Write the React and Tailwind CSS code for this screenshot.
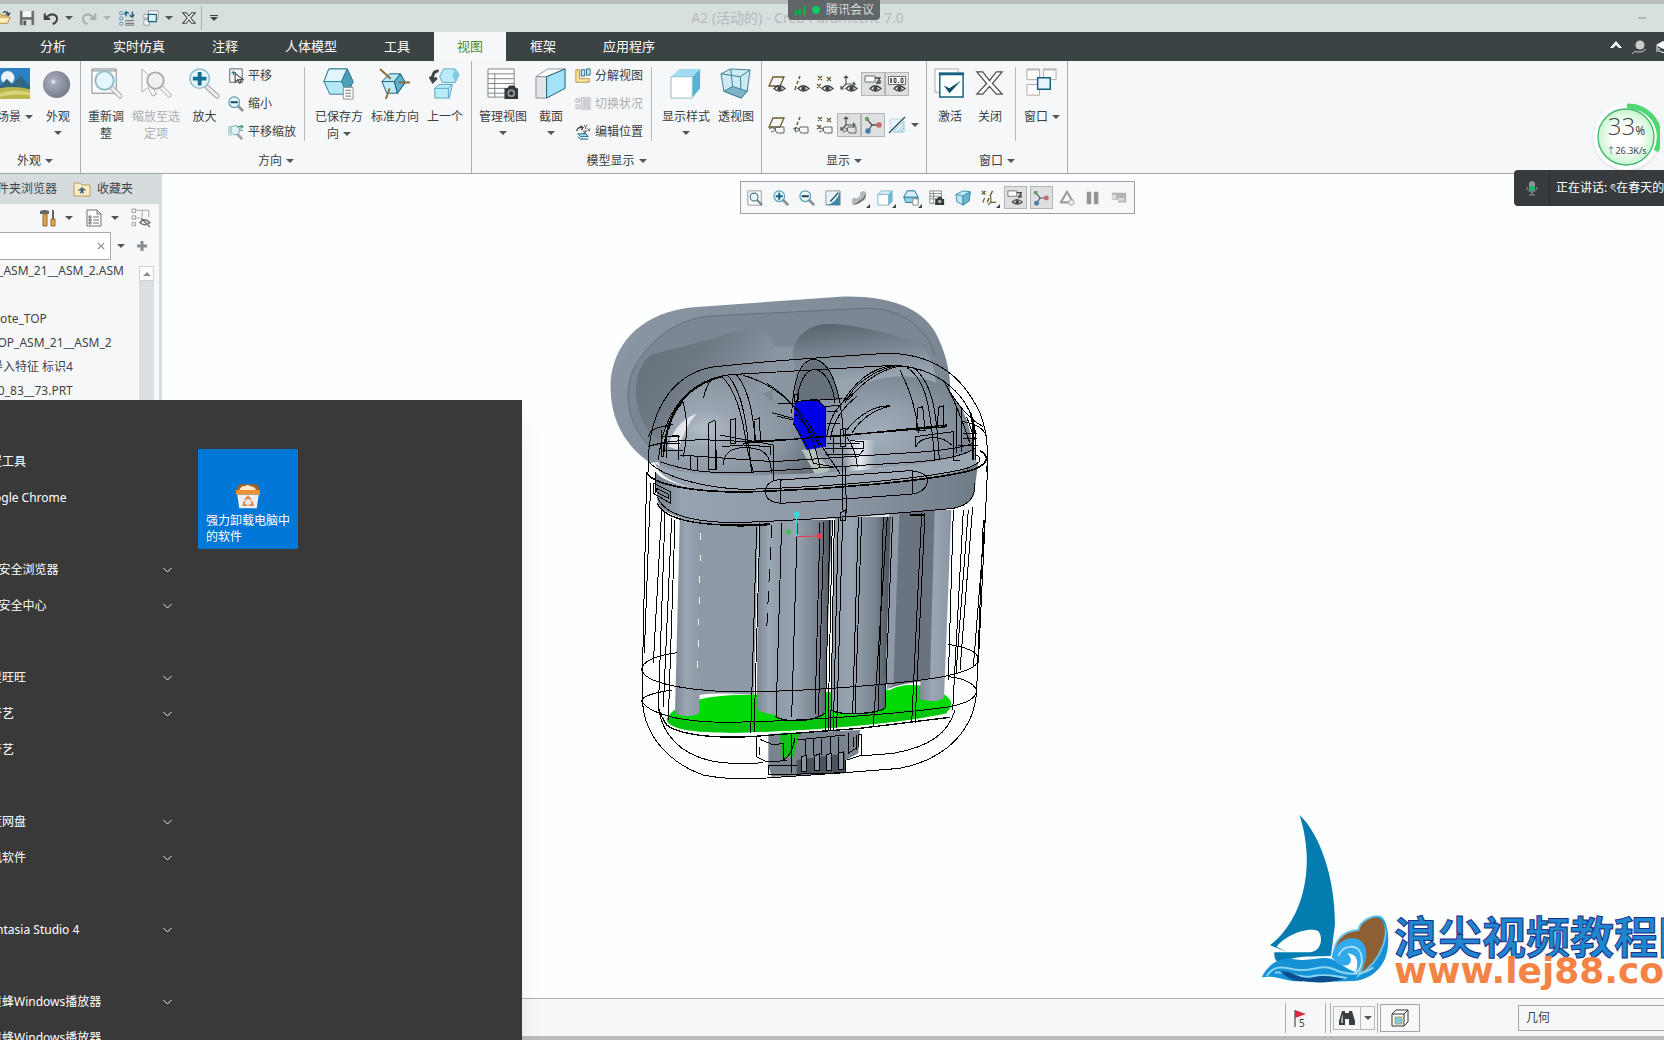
import React, { useState } from "react";

const tabs = [
  "分析",
  "实时仿真",
  "注释",
  "人体模型",
  "工具",
  "视图",
  "框架",
  "应用程序",
];

const tree = [
  { name: "TOP_ASM_21__ASM_2.ASM", root: true },
  { name: "" },
  { name: "Note_TOP" },
  { name: "TOP_ASM_21__ASM_2" },
  { name: "导入特征 标识4" },
  { name: "10_83__73.PRT" },
];

const apps = [
  { name: "设置工具" },
  { name: "Google Chrome" },
  null,
  { name: "360安全浏览器", folder: true },
  { name: "360安全中心", folder: true },
  null,
  { name: "阿里旺旺", folder: true },
  { name: "爱奇艺", folder: true },
  { name: "爱奇艺" },
  null,
  { name: "百度网盘", folder: true },
  { name: "腾讯软件", folder: true },
  null,
  { name: "Camtasia Studio 4", folder: true },
  null,
  { name: "大黄蜂Windows播放器", folder: true },
  { name: "大黄蜂Windows播放器" },
];

const eye = (
  <g>
    <path d="M6 13.500q5 -5.500 11 0q-5.500 5 -11 0z" fill="#fff" stroke="#3f4446" strokeWidth="1.300" />
    <circle cx="11.500" cy="13.500" r="2.200" fill="#3f4446" />
  </g>
);

const tag = (
  <path
    d="M1 13q3 -3 6 0M3 16q3 0 5 -3M8 11h8v6h-7l-2 -3z"
    fill="none"
    stroke="#5d6468"
  />
);

const plane = <path d="M5 2h11l-4 9H1z" fill="none" stroke="#6b5c2b" strokeWidth="1.300" />;
const axis = <path d="M8 1l-1 3M6 6l-1 3M4 11l-1 4" stroke="#6b5c2b" strokeWidth="1.500" />;
const points = (
  <path
    d="M2 1l4 4m0 -4l-4 4M11 2l4 4m0 -4l-4 4M1 9l4 4m0 -4l-4 4"
    stroke="#6b5c2b"
    strokeWidth="1.200"
  />
);
const csys = (
  <path
    d="M6 1v8h9M6 9l-5 5M4 3l2 -2l2 2M13 7l2 2l-2 2M1 11v3h3"
    fill="none"
    stroke="#4c5254"
    strokeWidth="1.200"
  />
);

// small icons are drawn on an 18 x 18 grid
const small = {
  open: (
    <g>
      <path d="M1 4h5l1 2h6v8H1z" fill="#f6d98e" stroke="#b28b3a" />
      <path d="M4 8h13l-3 7H1z" fill="#fdecb5" stroke="#b28b3a" />
      <path d="M9 3q5 -3 6 2M17 3l-2 3l-3 -2" fill="none" stroke="#3f4446" strokeWidth="1.500" />
    </g>
  ),
  save: (
    <g>
      <path d="M1 1h16v16H1z" fill="#6b7173" />
      <path d="M4 1h10v7H4z" fill="#f4f6f7" />
      <path d="M4 11h10v6H4z" fill="#dfe3e4" />
      <path d="M5 12h3v5H5z" fill="#4d5356" />
    </g>
  ),
  undo: (
    <path
      d="M2 4v6h6M3 9q7 -7 12 -2q3 5 -4 9"
      fill="none"
      stroke="#3f4446"
      strokeWidth="2.400"
    />
  ),
  redo: (
    <path
      d="M16 4v6h-6M15 9q-7 -7 -12 -2q-3 5 4 9"
      fill="none"
      stroke="#a9b0b1"
      strokeWidth="2.400"
    />
  ),
  regen: (
    <g fill="none">
      <path d="M1 2h3v3H1zM1 8h3v3H1zM1 14h3v3H1z" fill="#fff" stroke="#5b89a3" />
      <path d="M7 12h10M7 15h10M7 17h10" stroke="#596063" />
      <path d="M8 7V2l3 2M8 2l-2 3M15 2v6l-3 -2M15 8l2 -3" stroke="#17607f" strokeWidth="1.500" />
    </g>
  ),
  windows: (
    <g fill="#fff" stroke="#8a9296">
      <path d="M6 1h11v9H6zM1 5h6v4H1zM1 11h6v6H1z" />
      <path d="M6 5h9v8H6z" fill="#d9f0f8" stroke="#17607f" strokeWidth="1.300" />
    </g>
  ),
  close: (
    <path
      d="M2 3h4l3 4l3 -4h4l-5 6l5 6h-4l-3 -4l-3 4H2l5 -6z"
      fill="#fff"
      stroke="#3f4446"
      strokeWidth="1.200"
    />
  ),
  pan: (
    <g fill="none" stroke="#4d5356">
      <path d="M2 1h14v15H2z" />
      <path d="M8 6v10l3 -3l2 4l2 -1l-2 -3h4z" fill="#fff" strokeWidth="1.300" />
      <path d="M4 5h5M6 3v5" stroke="#17607f" />
    </g>
  ),
  zoomIn: (
    <g>
      <path d="M11 11l6 6" stroke="#8a9296" strokeWidth="3" />
      <circle cx="7" cy="7" r="6" fill="#e6f7fc" stroke="#5b9cb8" strokeWidth="1.300" />
      <path d="M3 7h8M7 3v8" stroke="#0f5f86" strokeWidth="2.200" />
    </g>
  ),
  zoomOut: (
    <g>
      <path d="M11 11l6 6" stroke="#8a9296" strokeWidth="3" />
      <circle cx="7" cy="7" r="6" fill="#e6f7fc" stroke="#5b9cb8" strokeWidth="1.300" />
      <path d="M3 7h8" stroke="#17405a" strokeWidth="2.200" />
    </g>
  ),
  refit: (
    <g>
      <path d="M1 1h15v16H1z" fill="#fff" stroke="#8a9296" />
      <path d="M11 11l6 6" stroke="#7d8589" strokeWidth="2.500" />
      <circle cx="8" cy="8" r="4.500" fill="#e6f7fc" stroke="#54707f" strokeWidth="1.300" />
    </g>
  ),
  panZoom: (
    <g>
      <path d="M10 11l6 6" stroke="#9aa2a5" strokeWidth="3" />
      <path d="M1 3h5M1 3v8l3 2" fill="none" stroke="#9fc7c9" strokeWidth="1.500" />
      <circle cx="8" cy="7" r="5" fill="#dff3f3" stroke="#7fb3b8" strokeWidth="1.300" />
      <path d="M10 3h6M14 1l3 2l-3 2M13 7h4" fill="none" stroke="#4f9a7e" strokeWidth="1.300" />
    </g>
  ),
  explode: (
    <g>
      <path d="M1 2h4v10h11v4H1z" fill="#fbe3a1" stroke="#b28b3a" />
      <path d="M7 2h4v7H7zM13 1h4v7h-4z" fill="#bfe6f5" stroke="#17607f" />
    </g>
  ),
  toggle: (
    <g fill="#e6e8ea" stroke="#b3b8bb">
      <path d="M1 3h4v4H1zM1 10h4v4H1zM7 2h10v13H7zM10 4h1v9h-1zM13 4h2v9h-2z" />
    </g>
  ),
  edit: (
    <g fill="none">
      <path d="M2 8q1 -5 6 -4M6 2l3 2l-2 3" stroke="#3f4446" strokeWidth="1.500" />
      <path d="M10 1l2 2l2 -2M12 3v3M14 5l3 3m0 -3l-3 3M9 8h4l-4 3h4" stroke="#3f4446" />
      <path d="M3 11h9l3 3H6zM3 14l3 3h9" fill="#a7dff1" stroke="#17607f" />
    </g>
  ),
  planeEye: <g>{plane}{eye}</g>,
  axisEye: <g>{axis}{eye}</g>,
  pointEye: <g>{points}{eye}</g>,
  csysEye: <g>{csys}{eye}</g>,
  noteEye: (
    <g>
      <path d="M1 1h10v6H1z" fill="#fff" stroke="#6b7173" />
      <path d="M11 3h5l-3 5M12 8h4v-3" fill="none" stroke="#3f4446" strokeWidth="1.300" />
      {eye}
    </g>
  ),
  dimEye: (
    <g>
      <path d="M0.500 1.500h17v8H0.500z" fill="#fff" stroke="#6b7173" />
      <path d="M3 3v5" stroke="#2f3436" strokeWidth="1.500" />
      <path d="M6 3.500h2v4H6zM13 3.500h2v4h-2z" fill="none" stroke="#2f3436" />
      <path d="M10 7h1v1h-1z" fill="#2f3436" />
      {eye}
    </g>
  ),
  planeTag: <g>{plane}{tag}</g>,
  axisTag: <g>{axis}{tag}</g>,
  pointTag: <g>{points}{tag}</g>,
  csysTag: <g>{csys}{tag}</g>,
  spin: (
    <g>
      <path d="M3 3l5 6h7M8 9l-4 6" fill="none" stroke="#4c5254" strokeWidth="1.300" />
      <circle cx="3" cy="3" r="2.200" fill="#6a9b67" />
      <circle cx="15" cy="9" r="2.800" fill="#c9686c" />
      <circle cx="4" cy="15" r="2.800" fill="#4c7fa5" />
    </g>
  ),
  hidden: (
    <g>
      <path d="M2 3h13l-12 12z" fill="#e6f7fc" stroke="#a8cddb" strokeDasharray="2 1" />
      <path d="M5 16l11 -11v11zM9 16l7 -7M12 16l4 -4" fill="#e6f7fc" stroke="#8fc3d8" />
      <path d="M1 17L17 1" stroke="#2b4a5c" strokeWidth="1.300" />
    </g>
  ),
  repaint: (
    <g>
      <path d="M1 1h16v16H1z" fill="#e6f4f8" stroke="#8a9296" />
      <path d="M17 1v16H1q12 -2 16 -16z" fill="#3d8aa6" />
      <path d="M6 13L15 3" stroke="#24495c" strokeWidth="1.500" />
    </g>
  ),
  shade: (
    <g>
      <path d="M1 12q0 -4 5 -3q5 0 4 -6q5 -4 7 0q1 6 -5 9q-6 6 -11 4z" fill="#b5b9bb" />
      <path d="M9 12q6 -2 7 -8q2 6 -4 9q-5 4 -9 3q4 -1 6 -4z" fill="#6a6f71" />
    </g>
  ),
  box: (
    <g stroke="#7ab5cd">
      <path d="M1 5l4 -4h12l-4 4z" fill="#d9f2fa" />
      <path d="M13 5l4 -4v12l-4 4z" fill="#6bbad8" />
      <path d="M1 5h12v12H1z" fill="#fff" />
    </g>
  ),
  saved: (
    <g stroke="#2f7d98">
      <path d="M5 1h8l4 7l-4 6H5L1 8z" fill="#b9e6f4" />
      <path d="M1 8h16v6H3z" fill="#8fcfe2" />
      <path d="M5 1h8l4 7H1z" fill="#d5f0f8" />
      <path d="M11 10h6v7h-6z" fill="#fff" stroke="#7d8589" />
    </g>
  ),
  manage: (
    <g>
      <path d="M1 1h13v14H1zM1 4h13M1 7h13M1 10h13M5 1v14" fill="#fff" stroke="#7d8589" />
      <path d="M7 10h2l1 -2h4l1 2h2v7H7z" fill="#33383a" />
      <circle cx="12" cy="13" r="2" fill="#a9b0b1" />
    </g>
  ),
  persp: (
    <g stroke="#3c8aa6">
      <path d="M1 5l8 -4l8 1l-1 10l-7 5l-7 -4z" fill="#b9e6f4" />
      <path d="M1 5l8 2l8 -5M9 7v10" fill="none" />
      <path d="M9 7l8 -5l-1 10l-7 5z" fill="#6bb4cd" />
    </g>
  ),
  datum: (
    <g fill="none">
      <path d="M1 1l4 4m0 -4l-4 4M13 1l-3 6M9 9l-2 5" stroke="#6b5c2b" strokeWidth="1.500" />
      <path d="M11 7v7h6M11 14l-3 3M4 9l-2 5" stroke="#6b5c2b" strokeWidth="1.300" />
    </g>
  ),
  warn: (
    <g fill="none" stroke="#9a9ea0">
      <path d="M9 2l7 12H2z" strokeWidth="2.500" strokeLinejoin="round" />
      <circle cx="14" cy="14" r="3" fill="#eceeef" />
    </g>
  ),
  pause: <path d="M2 2h5v14H2zM10 2h5v14h-5z" fill="#929698" />,
  export: (
    <g>
      <path d="M1 3h16v11H8v-3H1z" fill="#b1b4b6" />
      <path d="M1 5h5v5H1zM8 9h7v3H8z" fill="#d9dbdc" />
    </g>
  ),
  folder: (
    <g>
      <path d="M1 3h6l2 2h8v11H1z" fill="#fbeec8" stroke="#b49c5c" />
      <path d="M9 7v7M5 10h8M7 8l4 5M11 8l-4 5" stroke="#24495c" />
    </g>
  ),
  tools: (
    <g>
      <path d="M1 2q5 -2 9 0v3H1z" fill="#60666a" />
      <path d="M4 5h4v12H4z" fill="#dba35c" stroke="#9b6b2c" />
      <path d="M14 1v9" stroke="#60666a" strokeWidth="2" />
      <path d="M12 10h4v7h-4z" fill="#e0a45a" stroke="#9b6b2c" />
    </g>
  ),
  list: (
    <g fill="none" stroke="#6b7173">
      <path d="M2 1h10l4 4v12H2z" fill="#fff" />
      <path d="M12 1v4h4M8 8h6M8 11h6M8 14h6" />
      <path d="M4 7h2v2H4zM4 10h2v2H4zM4 13h2v2H4z" />
    </g>
  ),
  treeHide: (
    <g fill="none" stroke="#a5abad">
      <path d="M1 1h3v3H1zM1 7h3v3H1zM1 13h3v3H1zM4 2h12M10 2v6M4 9h4M16 2v6" />
      <path d="M8 13q4 -5 9 0q-5 4 -9 0zM9 9l8 8" stroke="#6b7173" strokeWidth="1.300" />
    </g>
  ),
};

// large icons are drawn on a 32 x 32 grid
const large = {
  scene: (
    <g>
      <path d="M0 0h32v32H0z" fill="#2f7fc4" />
      <circle cx="9" cy="10" r="7" fill="#eaf6fc" />
      <path d="M0 20L8 11l6 6l8 -9l10 10v6H0z" fill="#33667f" />
      <path d="M0 21q16 -3 32 1v10H0z" fill="#b9b64c" />
      <path d="M0 26q16 -5 32 -1v3q-16 -2 -32 2z" fill="#d9d27a" />
    </g>
  ),
  sphere: (
    <g>
      <defs>
        <radialGradient id="sphere" cx="0.380" cy="0.400" r="0.650">
          <stop offset="0" stopColor="#f0f2f8" />
          <stop offset="0.180" stopColor="#a4a9b8" />
          <stop offset="1" stopColor="#757a88" />
        </radialGradient>
      </defs>
      <circle cx="15" cy="17" r="14" fill="url(#sphere)" />
    </g>
  ),
  refit: (
    <g>
      <path d="M2 1h25v25H2z" fill="#fdfefe" stroke="#7d8589" />
      <path d="M2 3h25" stroke="#7d8589" />
      <path d="M22 20l9 9" stroke="#9aa0a3" strokeWidth="5" strokeLinecap="round" />
      <path d="M22 20l9 9" stroke="#eceeef" strokeWidth="3" strokeLinecap="round" />
      <circle cx="15" cy="13" r="9.500" fill="#e6f7fc" stroke="#8fbccb" strokeWidth="2" />
    </g>
  ),
  zoomSel: (
    <g stroke="#a9adb0">
      <path d="M2 1v24l6 -5l5 9l4 -2l-5 -9h8z" fill="#f8f9fa" />
      <path d="M22 20l8 8" stroke="#b3b7b9" strokeWidth="5" strokeLinecap="round" />
      <path d="M22 20l8 8" stroke="#f0f1f2" strokeWidth="3" strokeLinecap="round" />
      <circle cx="16" cy="13" r="8.500" fill="#eff0f1" strokeWidth="2" />
    </g>
  ),
  zoomIn: (
    <g>
      <path d="M19 20l10 9" stroke="#9aa0a3" strokeWidth="5" strokeLinecap="round" />
      <path d="M19 20l10 9" stroke="#eceeef" strokeWidth="3" strokeLinecap="round" />
      <circle cx="11" cy="11" r="10" fill="#e6f7fc" stroke="#8fbccb" strokeWidth="1.500" />
      <path d="M4 11h14M11 4v14" stroke="#136f98" strokeWidth="4" />
    </g>
  ),
  saved: (
    <g stroke="#2f7d98">
      <path d="M6 1h19l6 13l-6 13H7L1 14z" fill="#b4e8f6" />
      <path d="M6 1h19l-6 13H1z" fill="#e0f6fb" />
      <path d="M25 1l6 13l-6 13l-6 -13z" fill="#4c9fb5" />
      <path d="M21 20h10v12H21z" fill="#fff" stroke="#8a9296" />
      <path d="M23 23h6M23 26h6M23 29h6" stroke="#6b7173" />
    </g>
  ),
  standard: (
    <g>
      <path d="M3 14l8 -8h11l5 9l-8 11H8z" fill="#bdeaf7" stroke="#17607f" />
      <path d="M3 14h13l6 -8M16 14l3 12" fill="none" stroke="#17607f" />
      <path d="M16 14l6 -8l5 9l-8 11z" fill="#5fb2cd" stroke="#17607f" />
      <path d="M1 1l11 10M20 15h12M11 21L7 32" stroke="#8a6d3b" strokeWidth="2" />
    </g>
  ),
  previous: (
    <g>
      <path d="M10 3q-7 0 -6 9M1 9l3 5l4 -4" fill="none" stroke="#3f4446" strokeWidth="3" />
      <path d="M15 1h12l4 6l-4 8H14l-3 -6z" fill="#b9ebf8" stroke="#5ba9c4" />
      <path d="M27 1l4 6l-4 8l-3 -7z" fill="#7fcbe2" />
      <path d="M6 21l4 -4h14l-3 14H6z" fill="#b9ebf8" stroke="#5ba9c4" />
      <path d="M6 21h14l4 -4M20 21v10" fill="none" stroke="#5ba9c4" />
    </g>
  ),
  manage: (
    <g>
      <path
        d="M1 1h27v29H1zM1 6h27M1 11h27M1 16h27M1 21h27M1 26h27M8 6v24"
        fill="#fff"
        stroke="#7d8589"
      />
      <path d="M18 21h3l2 -3h5l2 3h2v11H18z" fill="#33383a" />
      <circle cx="25" cy="26" r="4" fill="#8a9093" />
      <circle cx="25" cy="26" r="2" fill="#2a2e30" />
    </g>
  ),
  section: (
    <g>
      <path d="M1 9L13 1h18L12 9z" fill="#fff" stroke="#8a9296" />
      <path d="M1 9h11v22H1z" fill="#e3e5ea" stroke="#8a9296" />
      <path d="M12 9L31 1v20L12 31z" fill="#a3e3f8" stroke="#17607f" />
    </g>
  ),
  style: (
    <g>
      <path d="M1 9l9 -8h21l-8 8z" fill="#9fdcf0" />
      <path d="M23 9l8 -8v20l-8 10z" fill="#57b3d4" />
      <path d="M1 9h22v22H1z" fill="#fff" stroke="#8fbccb" />
    </g>
  ),
  persp: (
    <g stroke="#3c7f96">
      <path d="M1 6L11 1l20 1l-3 22l-6 7l-18 -7z" fill="#cdeaf2" />
      <path d="M1 6l20 3L31 2M21 9l1 22" fill="none" />
      <path d="M4 24l9 -5l15 5l-6 7z" fill="#7fb4c7" />
      <path d="M11 1l2 18" fill="none" />
    </g>
  ),
  activate: (
    <g>
      <path d="M1 1h24v24H1z" fill="#fff" stroke="#a5abad" />
      <path d="M6 6h24v24H6z" fill="#fff" stroke="#17607f" strokeWidth="1.500" />
      <path d="M5 6h26" stroke="#17607f" strokeWidth="3" />
      <path d="M10 18l6 8L28 13l-12 8z" fill="#0f4f66" />
    </g>
  ),
  close: (
    <path
      d="M3 4h6l7 9l7 -9h6l-10 12l10 11h-6l-7 -8l-7 8H3l10 -11z"
      fill="#fff"
      stroke="#4c5254"
      strokeWidth="1.300"
    />
  ),
  window: (
    <g fill="#fff" stroke="#b0a8a4">
      <path d="M1 1h13v11H1zM18 1h13v11H18zM1 17h13v11H1z" />
      <path d="M1 2h13M18 2h13" />
      <path d="M12 10h13v12H12z" fill="#e3f5fa" stroke="#17607f" strokeWidth="1.500" />
    </g>
  ),
};

function Icon({ name, className = "size-[18px]" }) {
  return (
    <svg viewBox="0 0 18 18" className={"shrink-0 " + className} fill="none" aria-hidden="true">
      {small[name]}
    </svg>
  );
}

function BigIcon({ name }) {
  return (
    <svg viewBox="0 0 33 33" className="size-8 shrink-0" fill="none" aria-hidden="true">
      {large[name]}
    </svg>
  );
}

function Caret({ className = "text-[#50575a]" }) {
  return (
    <svg viewBox="0 0 8 4" className={"w-2 h-1 shrink-0 " + className} aria-hidden="true">
      <path d="M0 0h8l-4 4z" fill="currentColor" />
    </svg>
  );
}

function BigButton({ icon, lines, caret, width, disabled }) {
  return (
    <button
      type="button"
      disabled={disabled}
      className={
        "flex flex-col items-center gap-2 pt-[7px] shrink-0 leading-[17px] whitespace-nowrap disabled:text-[#a9aeb1] " +
        width
      }
    >
      <BigIcon name={icon} />
      <span className="flex flex-col items-center">
        {lines.map((line, index) => (
          <span key={line} className="flex items-center gap-1">
            {line}
            {caret === "inline" && index === lines.length - 1 && <Caret />}
          </span>
        ))}
        {caret === "below" && (
          <span className="flex items-center h-4">
            <Caret />
          </span>
        )}
      </span>
    </button>
  );
}

function SmallButton({ icon, label, disabled }) {
  return (
    <button
      type="button"
      disabled={disabled}
      className="flex items-center gap-1 h-7 whitespace-nowrap disabled:text-[#a9aeb1]"
    >
      <Icon name={icon} className="size-4" />
      {label}
    </button>
  );
}

function Group({ label, className = "", children }) {
  return (
    <section className={"flex flex-col shrink-0 border-r border-[#a9afb2] " + className}>
      <div className="flex h-21">{children}</div>
      <button type="button" className="flex items-center justify-center gap-1 h-7 pt-1">
        {label}
        <Caret />
      </button>
    </section>
  );
}

function Divider({ className = "" }) {
  return <div className={"w-px h-[74px] mt-1.5 bg-[#b5babd] " + className} />;
}

function ToggleRow({ icons, active, children }) {
  return (
    <div className="flex items-center">
      {icons.map((name) => (
        <button
          key={name}
          type="button"
          aria-label={name}
          className={
            "size-6 flex items-center justify-center border " +
            (active.includes(name)
              ? "bg-[#dedfe1] border-[#b3b6b8]"
              : "border-transparent")
          }
        >
          <Icon name={name} />
        </button>
      ))}
      {children}
    </div>
  );
}

function TitleBar() {
  return (
    <div className="flex items-center h-8 border-t-4 border-[#b8bcbe] bg-[#d7dfdf]">
      <div className="flex items-center gap-2 -ml-[5px]">
        <button type="button" aria-label="打开"><Icon name="open" className="size-4" /></button>
        <button type="button" aria-label="保存"><Icon name="save" className="size-4" /></button>
        <button type="button" aria-label="撤消" className="flex items-center gap-1.5">
          <Icon name="undo" className="size-4" />
          <Caret />
        </button>
        <button type="button" aria-label="重做" className="flex items-center gap-1.5">
          <Icon name="redo" className="size-4" />
          <Caret className="text-[#a9b0b1]" />
        </button>
        <button type="button" aria-label="重新生成"><Icon name="regen" className="size-4" /></button>
        <button type="button" aria-label="窗口" className="flex items-center gap-1.5">
          <Icon name="windows" className="size-4" />
          <Caret />
        </button>
        <button type="button" aria-label="关闭"><Icon name="close" className="size-4" /></button>
        <div className="w-px h-6 -ml-1 bg-[#a9b0b1]" />
        <button type="button" aria-label="自定义" className="flex flex-col gap-px">
          <span className="w-2 h-px bg-[#3f4446]" />
          <Caret className="text-[#3f4446]" />
        </button>
      </div>
      <h1 className="flex-1 text-center text-sm text-[#b3bbbb]">
        A2 (活动的) - Creo Parametric 7.0
      </h1>
      <div className="flex justify-end w-[287px] pr-[18px]">
        <button type="button" aria-label="最小化" className="w-2 h-0.5 bg-[#b3b9b9]" />
      </div>
    </div>
  );
}

function TabBar({ tab, setTab }) {
  return (
    <nav className="flex items-center justify-between h-[29px] pl-[17px] bg-[#3c4344] text-white overflow-hidden">
      <div className="flex gap-px h-full">
        {tabs.map((t) => (
          <button
            key={t}
            type="button"
            onClick={() => setTab(t)}
            className={
              "px-[23px] text-[13px] whitespace-nowrap " +
              (t === tab ? "bg-[#f6f8f9] text-[#4c8a2c]" : "")
            }
          >
            {t}
          </button>
        ))}
      </div>
      <div className="flex items-center gap-2.5 -mr-1.5">
        <button type="button" aria-label="收起">
          <svg viewBox="0 0 12 8" className="w-3 h-2 mb-1.5">
            <path d="M0 8l6 -7l6 7h-3l-3 -3l-3 3z" fill="#fff" />
          </svg>
        </button>
        <button type="button" aria-label="搜索">
          <svg viewBox="0 0 14 14" className="size-3.5">
            <circle cx="8" cy="5" r="4.500" fill="#c9cfcf" />
            <path d="M0 14q3 -4 6 -2q4 1 8 -3" fill="none" stroke="#c9cfcf" />
          </svg>
        </button>
        <button type="button" aria-label="学习">
          <svg viewBox="0 0 14 12" className="w-3.5 h-3">
            <path d="M0 4l7 -4l7 4l-7 4z" fill="#fff" />
            <path d="M3 7v3q4 3 8 0V7M1 5v6" fill="none" stroke="#fff" />
          </svg>
        </button>
      </div>
    </nav>
  );
}

function Ribbon() {
  return (
    <div className="flex h-[113px] bg-[#f6f7f9] border-b border-[#9fa7aa] text-xs text-[#3a4043] overflow-hidden">
      <Group label="外观" className="w-[91px] -ml-[10px]">
        <BigButton icon="scene" lines={["场景"]} caret="inline" width="w-[50px]" />
        <BigButton icon="sphere" lines={["外观"]} caret="below" width="w-9" />
      </Group>
      <Group label="方向" className="w-[391px]">
        <BigButton icon="refit" lines={["重新调", "整"]} width="w-[50px]" />
        <BigButton icon="zoomSel" lines={["缩放至选", "定项"]} width="w-[50px]" disabled />
        <BigButton icon="zoomIn" lines={["放大"]} width="w-[47px]" />
        <div className="pt-px">
          <SmallButton icon="pan" label="平移" />
          <SmallButton icon="zoomOut" label="缩小" />
          <SmallButton icon="panZoom" label="平移缩放" />
        </div>
        <Divider className="ml-2 mr-1.5" />
        <BigButton icon="saved" lines={["已保存方", "向"]} caret="inline" width="w-14" />
        <BigButton icon="standard" lines={["标准方向"]} width="w-14" />
        <BigButton icon="previous" lines={["上一个"]} width="w-11" />
      </Group>
      <Group label="模型显示" className="w-[290px]">
        <BigButton icon="manage" lines={["管理视图"]} caret="below" width="w-14 ml-[3px]" />
        <BigButton icon="section" lines={["截面"]} caret="below" width="w-10" />
        <div className="ml-1 pt-px">
          <SmallButton icon="explode" label="分解视图" />
          <SmallButton icon="toggle" label="切换状况" disabled />
          <SmallButton icon="edit" label="编辑位置" />
        </div>
        <Divider className="ml-2 mr-1.5" />
        <BigButton icon="style" lines={["显示样式"]} caret="below" width="w-14" />
        <BigButton icon="persp" lines={["透视图"]} width="w-11" />
      </Group>
      <Group label="显示" className="w-[165px]">
        <div className="flex flex-col justify-between pl-[3px] pt-[11px] pb-2">
          <ToggleRow
            icons={["planeEye", "axisEye", "pointEye", "csysEye", "noteEye", "dimEye"]}
            active={["noteEye", "dimEye"]}
          />
          <ToggleRow
            icons={["planeTag", "axisTag", "pointTag", "csysTag", "spin", "hidden"]}
            active={["csysTag", "spin"]}
          >
            <Caret className="text-[#50575a] ml-0.5" />
          </ToggleRow>
        </div>
      </Group>
      <Group label="窗口" className="w-[141px]">
        <BigButton icon="activate" lines={["激活"]} width="w-11 ml-px" />
        <BigButton icon="close" lines={["关闭"]} width="w-9" />
        <Divider className="ml-[7px] mr-1" />
        <BigButton icon="window" lines={["窗口"]} caret="inline" width="w-11" />
      </Group>
    </div>
  );
}

function Sidebar() {
  const [search, setSearch] = useState("");

  return (
    <aside className="flex flex-col w-[162px] shrink-0 overflow-hidden bg-[#d6dcdd] text-xs text-[#3f4548]">
      <div className="flex items-center gap-4 h-[30px] -ml-[15px] whitespace-nowrap">
        <button type="button">文件夹浏览器</button>
        <button type="button" className="flex items-center gap-1.5">
          <Icon name="folder" />
          收藏夹
        </button>
      </div>
      <div className="flex-1 min-h-0 mr-[3px] bg-[#f7f8f9] overflow-hidden">
        <div className="flex items-center justify-end gap-3 h-7 pr-2">
          <button type="button" aria-label="工具" className="flex items-center gap-2">
            <Icon name="tools" />
            <Caret />
          </button>
          <button type="button" aria-label="设置" className="flex items-center gap-2">
            <Icon name="list" />
            <Caret />
          </button>
          <button type="button" aria-label="隐藏">
            <Icon name="treeHide" className="size-5" />
          </button>
        </div>
        <div className="flex items-center">
          <div className="flex items-center justify-end w-[111px] h-7 border border-l-0 border-[#a5abad] bg-white">
            <input
              type="text"
              aria-label="搜索"
              value={search}
              onChange={(e) => setSearch(e.target.value)}
              className="flex-1 min-w-0 outline-none"
            />
            <button type="button" aria-label="清除" onClick={() => setSearch("")}>
              <svg viewBox="0 0 10 10" className="size-2 mr-[5px]">
                <path d="M1 1l8 8M9 1l-8 8" stroke="#8a9093" strokeWidth="1.500" />
              </svg>
            </button>
          </div>
          <button type="button" aria-label="过滤" className="ml-1.5">
            <Caret />
          </button>
          <button type="button" aria-label="添加" className="ml-3">
            <svg viewBox="0 0 10 10" className="size-2.5">
              <path d="M5 0v10M0 5h10" stroke="#868c8f" strokeWidth="3" />
            </svg>
          </button>
        </div>
        <div className="flex justify-between h-full pr-[5px]">
          <ul className="-ml-[9px] -mt-px whitespace-nowrap">
            {tree.map((node, index) => (
              <li key={index} className={"h-6 leading-6 " + (node.root ? "-ml-4" : "")}>
                {node.name}
              </li>
            ))}
          </ul>
          <div className="w-[15px] mt-1.5 bg-[#dcdfe2]">
            <div className="flex items-center justify-center h-[15px] border border-[#d0d3d6] bg-white">
              <Caret className="text-[#8a9093] rotate-180" />
            </div>
          </div>
        </div>
      </div>
    </aside>
  );
}

const viewTools = [
  "refit",
  "zoomIn",
  "zoomOut",
  "repaint",
  "shade",
  "box",
  "saved",
  "manage",
  "persp",
  "datum",
  "noteEye",
  "spin",
  "warn",
  "pause",
  "export",
];

const toolMenus = ["shade", "box", "saved", "datum"];

function ViewToolbar() {
  return (
    <div className="flex items-center gap-[3px] h-[33px] px-[3px] border border-[#9aa1a4] bg-[#f6f7f9]">
      {viewTools.map((name) => (
        <button
          key={name}
          type="button"
          aria-label={name}
          className={
            "relative flex items-center justify-center w-[23px] h-[23px] border " +
            (name === "noteEye" || name === "spin"
              ? "bg-[#dedfe1] border-[#b3b6b8]"
              : "border-transparent")
          }
        >
          <Icon name={name} className="size-4" />
          {toolMenus.includes(name) && (
            <svg viewBox="0 0 4 4" className="absolute right-0 bottom-0 size-1">
              <path d="M4 0v4H0z" fill="#3f4446" />
            </svg>
          )}
        </button>
      ))}
    </div>
  );
}

function Model() {
  return (
    <svg
      viewBox="0 0 1200 1530"
      className="absolute left-[438px] top-[106px] w-[400px] h-[510px]"
      fill="none"
      role="img"
      aria-label="A2"
    >
      <defs>
        <linearGradient id="lid" x1="0" x2="1" y1="0" y2="0.300">
          <stop offset="0" stopColor="#95a1ae" />
          <stop offset="0.150" stopColor="#8894a1" />
          <stop offset="1" stopColor="#7c8794" />
        </linearGradient>
        <linearGradient id="cavity" x1="0" x2="1" y1="0.100" y2="0.700">
          <stop offset="0" stopColor="#65707b" />
          <stop offset="0.400" stopColor="#6e7984" />
          <stop offset="1" stopColor="#98a3b0" />
        </linearGradient>
        <linearGradient id="cavityR" x1="0" x2="0.200" y1="0" y2="0.800">
          <stop offset="0" stopColor="#566069" />
          <stop offset="0.600" stopColor="#7e8996" />
          <stop offset="1" stopColor="#98a3b0" />
        </linearGradient>
        <radialGradient id="dome" cx="0.300" cy="0.500" r="0.750">
          <stop offset="0" stopColor="#b4bec8" />
          <stop offset="0.250" stopColor="#9ba6b2" />
          <stop offset="0.700" stopColor="#8994a1" />
          <stop offset="1" stopColor="#66707b" />
        </radialGradient>
        <radialGradient id="domeR" cx="0.350" cy="0.600" r="0.800">
          <stop offset="0" stopColor="#a3aebb" />
          <stop offset="0.400" stopColor="#929dab" />
          <stop offset="1" stopColor="#6f7a86" />
        </radialGradient>
        <linearGradient id="stem" x1="0" x2="1" y1="0" y2="0">
          <stop offset="0" stopColor="#8f9aa8" />
          <stop offset="0.350" stopColor="#98a3b1" />
          <stop offset="0.750" stopColor="#77828e" />
          <stop offset="1" stopColor="#474f57" />
        </linearGradient>
        <linearGradient id="post" x1="0" x2="1" y1="0" y2="0">
          <stop offset="0" stopColor="#7d8895" />
          <stop offset="0.400" stopColor="#9ba6b5" />
          <stop offset="1" stopColor="#8b96a4" />
        </linearGradient>
        <linearGradient id="band" x1="0" x2="1" y1="0" y2="0">
          <stop offset="0" stopColor="#737e8a" />
          <stop offset="0.080" stopColor="#98a3b1" />
          <stop offset="0.600" stopColor="#8a96a4" />
          <stop offset="1" stopColor="#707b87" />
        </linearGradient>
        <linearGradient id="shine" x1="0" x2="1" y1="0" y2="0">
          <stop offset="0" stopColor="#fff" stopOpacity="0" />
          <stop offset="0.500" stopColor="#f2f4fb" stopOpacity="0.900" />
          <stop offset="1" stopColor="#fff" stopOpacity="0" />
        </linearGradient>
      </defs>

      {/* lid */}
      <path
        d="M150 548C60 485 28 400 32 300C45 175 140 95 280 82L720 50C860 45 960 80 1005 155C1035 210 1055 280 1050 350V500z"
        fill="url(#lid)"
      />
      <path
        d="M150 500C70 420 60 300 135 215C185 155 250 115 330 108L800 85C900 85 980 140 1005 225L1020 480z"
        fill="#7b8793"
      />
      <path
        d="M150 500C70 420 60 300 135 215C185 155 250 115 330 108L800 85C900 85 980 140 1005 225"
        stroke="#56606a"
        strokeWidth="2"
      />
      <path
        d="M190 490C100 440 80 290 150 225L330 178C400 155 450 145 480 150C520 165 530 195 525 250L515 330L300 420z"
        fill="url(#cavity)"
      />
      <path d="M525 200L585 200V420L515 400z" fill="#8a95a2" />
      <path
        d="M580 240C570 180 620 134 680 132C760 130 860 160 930 180C985 205 1005 240 1010 330L620 360z"
        fill="url(#cavityR)"
      />
      <path d="M585 330C600 260 620 240 640 240C680 245 710 300 720 370L600 380z" fill="#67717c" />

      {/* board and inner posts */}
      <path
        d="M200 1318C220 1270 320 1242 440 1245L870 1230C900 1210 980 1205 1035 1245C1062 1262 1060 1290 1030 1300C900 1332 600 1355 400 1358C290 1358 205 1350 200 1318z"
        fill="#00da06"
      />
      <path d="M205 1310C300 1335 500 1330 700 1312L1045 1278L1040 1300C900 1332 600 1355 400 1358C290 1358 205 1350 200 1318z" fill="#05c50c" />
      <path d="M300 720H475L462 1245C400 1240 340 1238 298 1245z" fill="#8f9aa7" />
      <path d="M240 700H308L298 1298C280 1312 240 1310 225 1298z" fill="url(#post)" />
      <path d="M880 690H1020L1000 1200C960 1205 900 1210 870 1225z" fill="#697480" />
      <path d="M1004 690H1054L1032 1255C1010 1268 970 1265 958 1255L962 1200L990 1195z" fill="url(#post)" />
      <path d="M868 700H898L880 1215L860 1230z" fill="#8e9aa7" />
      <path d="M476 720H560L530 1305C500 1302 475 1295 470 1285z" fill="url(#post)" />
      <path d="M545 720H695L675 1295C650 1325 560 1330 528 1310z" fill="url(#stem)" />
      <path d="M705 710H872L855 1280C830 1308 730 1310 692 1290z" fill="url(#stem)" />

      {/* earbud heads */}
      <path d="M560 360H730L740 600H600z" fill="#8b96a3" />
      <path
        d="M175 550C185 400 250 320 350 295C460 295 550 380 595 460C625 515 640 560 645 600L200 585z"
        fill="url(#dome)"
      />
      <path
        d="M680 580C660 450 720 350 800 310C850 285 950 280 1010 310C1080 350 1115 420 1122 540z"
        fill="url(#domeR)"
      />
      <path d="M205 500Q220 430 290 400Q255 440 235 510z" fill="#f2f5f9" opacity="0.800" />
      <path d="M735 480H825V580H735z" fill="url(#shine)" />
      <path d="M605 510L640 505L690 570L650 590z" fill="#b5c0ba" />
      <path d="M585 365L650 358L675 380V500L620 510L580 430z" fill="#0000e6" />

      {/* collar */}
      <path
        d="M165 548C220 590 400 590 640 580C900 565 1080 545 1125 505L1130 550C1080 600 700 635 420 636C290 636 180 610 165 548z"
        fill="#9aa6b2"
      />
      <path
        d="M165 575L172 660C180 705 260 727 380 730C650 725 950 698 1060 685C1105 675 1125 660 1125 620L1135 545C1100 590 800 625 420 636C300 632 200 615 165 575z"
        fill="url(#band)"
      />

      {/* connector */}
      <path d="M505 1362L780 1350L775 1420L738 1440L735 1480L515 1490L505 1455z" fill="#7a848f" />
      <path d="M540 1358H598L580 1430H545z" fill="#0bc414" />
      <path d="M590 1440L735 1420V1478L590 1482z" fill="#4b535a" />

      <g stroke="#000" strokeWidth="3" shapeRendering="crispEdges">
        {/* transparent lid */}
        <path d="M145 575C140 400 210 290 330 262C500 242 700 230 860 220C1000 220 1090 290 1140 400C1165 460 1165 520 1160 575" />
        <path d="M175 540C190 400 260 300 390 284L880 256C1020 262 1110 350 1125 450V540" />
        <path d="M145 545C200 600 340 625 430 628C700 622 1000 592 1100 565C1140 550 1150 540 1130 525" />
        <path d="M140 575C150 610 260 635 420 636C700 630 1000 600 1110 572C1165 555 1172 530 1140 512" strokeWidth="5" />
        <path d="M180 545C260 575 340 580 430 578L880 550C1000 545 1090 530 1125 505M240 525L520 545L900 520C1000 515 1080 505 1120 490" />
        <path d="M430 485L580 478M700 470L1040 435M430 490L1040 440" strokeWidth="4" />
        <path d="M145 470C150 445 180 440 220 434M145 500C200 480 300 475 430 485M1160 470C1150 440 1120 430 1090 425" />

        {/* left head */}
        <path d="M200 520C190 430 240 320 370 290M250 370C265 420 262 470 250 530M365 290C410 330 430 420 440 500L460 578M385 288C430 340 440 430 455 578M410 285C450 330 460 420 468 490" />
        <path d="M190 530C195 420 240 330 350 292M205 450C210 420 230 380 250 365" strokeWidth="5" />
        <path d="M310 355Q320 310 340 295M430 286C520 310 600 380 650 470C670 510 700 550 720 580M500 310C570 350 630 420 660 560" />
        <path d="M325 430L345 420L348 570L325 568zM390 420L405 416V490H390zM462 420L478 414L482 488H464z" />
        <path d="M370 555C370 500 430 495 480 510C500 520 510 530 515 580M365 500L430 495L510 500V525M360 465L520 495V600M350 510V570" />
        <path d="M185 450V530M200 460V535M215 465L235 465V540M270 525V570M292 530V572M183 470H240M180 490H240M185 510H250" />

        {/* right head */}
        <path d="M735 370C760 310 830 265 900 255M745 360C790 300 850 265 905 258M720 380C770 290 830 262 880 256M680 470C690 400 720 370 760 340M690 480C700 420 730 380 770 350" />
        <path d="M900 270C930 330 950 390 955 460M920 262C980 300 990 380 1005 540M940 262C1000 310 1010 400 1018 540M1030 300C1060 350 1090 430 1110 490" />
        <path d="M740 450C780 400 830 375 870 378C820 390 780 420 755 460" />
        <path d="M952 385L968 380L975 450H950zM1015 382L1030 378V435H1013zM945 470L1060 455V540H1080M948 500C960 470 1020 460 1055 495M945 470V500" />
        <path d="M1070 380V520M1085 385V515M1100 410L1125 480M1090 460H1130M1090 475H1130M1075 495H1135M1040 320C1070 370 1110 420 1150 440" />
        <path d="M1120 420V540M1112 400L1125 460" strokeWidth="6" />

        {/* hinge */}
        <path d="M575 400C580 300 600 240 640 238C690 240 725 330 730 470M590 370C595 310 615 270 645 268C680 275 700 320 705 370" />
        <path d="M583 345L595 340V360L583 365zM535 370L585 372M515 398L580 415M530 408L580 420M630 362L725 356M675 380L720 375M680 395H715M680 430H720" />
        <path d="M585 365L650 358L675 380V500M585 400Q640 460 660 500M580 430L625 505L640 550L700 560M675 505H790V485L750 482M675 522H780L790 510M680 490H780M700 470V520" />
        <path d="M720 450L735 445V500H720zM728 500V690M740 470C760 500 770 530 772 560M720 700L735 690V720H720zM735 560L740 700" />

        {/* collar slot and latch */}
        <path d="M540 600H545L930 572C970 575 985 590 982 605C978 630 960 640 930 643L545 670C505 668 495 650 497 630C500 610 515 600 545 598zM540 600V670M937 572V643" />
        <path d="M160 610L212 635V670L160 640zM168 625L205 642V655L168 635zM165 575V640M172 650C190 700 260 725 400 728C600 722 900 700 1060 685C1110 675 1125 650 1125 610" />
        <path d="M172 670C190 715 280 735 400 735L510 732M360 735L420 738L500 735M930 705H975" strokeWidth="4" />

        {/* body side lines */}
        <path d="M140 580L128 1150M152 610L133 1120M185 690L160 1150M195 700L175 1290M215 715L190 1280M225 720L205 1320" />
        <path d="M1163 560L1135 1150M1155 720L1120 1160M1118 680L1080 1170M1105 690L1068 1180M1090 690L1058 1290M1060 690L1045 1200" />
        <path d="M470 740L452 1360M480 730L462 1360M545 730L528 1310M592 730L575 1310M660 730L645 1305M672 725L655 1310" />
        <path d="M515 735L500 1050" strokeDasharray="40 26" />
        <path d="M690 720L675 1355M697 720L684 1355M703 720L692 1350M715 715L700 1350M728 715L710 1345M785 710L765 1300M775 710L758 1300M850 710L835 1290M878 710L855 1285M862 710L820 1340M965 700L935 1330M975 700L945 1330" />
        <path d="M302 760L292 1210" stroke="#f1f2dc" strokeDasharray="20 44" />

        {/* body bottom */}
        <path d="M128 1150V1270C135 1370 210 1450 310 1485C380 1500 440 1498 500 1494L735 1478L900 1465C1050 1435 1125 1340 1130 1230L1150 720" />
        <path d="M175 1285C190 1370 240 1420 330 1442C380 1452 440 1452 490 1448M780 1428L880 1420C990 1400 1045 1360 1065 1290" />
        <path d="M230 1118C150 1130 125 1150 125 1170C135 1205 230 1228 380 1235C600 1238 900 1212 1030 1190C1120 1170 1135 1155 1135 1135C1130 1112 1090 1100 1045 1093" />
        <path d="M215 1230C150 1240 125 1250 125 1265C150 1300 230 1322 340 1326C520 1330 900 1302 1050 1280C1110 1268 1130 1250 1130 1230C1120 1210 1090 1195 1045 1190" />
        <path d="M200 1335C240 1365 340 1375 450 1370L780 1345L1050 1312M175 1285C180 1300 190 1320 200 1335M528 1310C560 1330 640 1325 675 1300M692 1290C730 1310 830 1300 855 1285" strokeWidth="4" />

        {/* connector outline */}
        <path d="M505 1455V1485L735 1478V1440M468 1370V1430L500 1445L560 1442M480 1378L520 1395L550 1390V1440M478 1400V1425M505 1455H590" />
        <path d="M590 1380L735 1365M615 1380V1430M640 1378V1425M665 1376V1425M690 1372V1420M715 1370V1420M745 1360V1420L775 1400V1365L785 1362V1425L740 1440" />
        <path d="M605 1430L620 1425V1475H605zM642 1428L657 1422V1472H642zM678 1425L693 1420V1470H678zM714 1420L730 1416V1468H714zM760 1370V1400M770 1365V1410" fill="#8a95a2" />
        <path d="M575 1362V1480M585 1375C580 1400 570 1430 550 1440" />
      </g>

      {/* view triad */}
      <path d="M590 705V770" stroke="#43d6d8" strokeWidth="4" />
      <path d="M590 770L655 768" stroke="#f0364a" strokeWidth="3" />
      <circle cx="590" cy="703" r="9" fill="#43d6d8" />
      <circle cx="658" cy="768" r="8" fill="#f0364a" />
      <circle cx="565" cy="755" r="8" fill="#3fc250" />
    </svg>
  );
}

function Watermark() {
  return (
    <div className="absolute left-[1098px] bottom-2.5 flex items-end gap-1 whitespace-nowrap">
      <svg viewBox="0 0 390 510" className="w-[130px] h-[170px] mb-1 shrink-0" aria-hidden="true">
        <path
          d="M118 2C180 60 225 190 225 330L213 425C160 430 100 420 60 450C45 440 42 430 43 415H150C185 412 190 370 175 352C140 335 70 370 50 398L80 413L30 394C100 340 145 240 140 120C138 80 130 35 118 2z"
          fill="#057cb0"
        />
        <path
          d="M5 490C30 440 70 430 100 435C150 445 180 425 215 435C240 445 255 465 290 475C330 470 360 400 378 350C400 420 360 490 290 500C230 505 170 500 130 500C90 510 50 480 5 490z"
          fill="#1592d6"
        />
        <path d="M220 430C220 380 250 350 295 348C300 320 340 300 365 310C395 345 370 440 295 485C320 440 320 400 290 385C250 385 235 410 235 440z" fill="#8d5f33" stroke="#69c3ea" strokeWidth="6" />
        <path
          d="M215 430C225 385 260 365 295 375C335 400 320 460 285 482C300 440 290 420 262 418C285 440 270 465 235 450"
          fill="#33a9ea"
        />
        <path d="M235 425C250 390 295 390 303 420C310 450 300 470 280 480" fill="none" stroke="#b9e6f8" strokeWidth="5" />
        <path
          d="M20 486C50 440 90 470 120 468C160 470 190 450 220 465C250 480 300 490 340 460M45 476C80 470 110 490 150 488C190 480 220 485 260 492"
          fill="none"
          stroke="#8bd5f4"
          strokeWidth="6"
        />
        <path d="M60 472C100 470 120 500 160 490C200 480 220 490 250 494C220 506 170 508 130 502C100 504 80 490 60 472z" fill="#0b4f8e" />
        <path d="M335 310C400 300 390 430 340 470C330 490 380 440 385 380C385 330 370 300 335 310z" fill="#1592d6" />
      </svg>
      <div>
        <p className="text-[44px] leading-[34px] font-bold text-[#1f86d0] [-webkit-text-stroke:1px_#1c2f86]">
          浪尖视频教程网
        </p>
        <p className="font-['DejaVu_Sans'] text-4xl leading-[34px] font-bold text-[#f58345]">
          www.lej88.com
        </p>
      </div>
    </div>
  );
}

function StartMenu() {
  return (
    <div className="absolute left-0 top-[400px] bottom-0 flex w-[522px] bg-[#393939] text-xs text-white shadow-xl overflow-hidden">
      <ul className="w-[198px] pt-11 -ml-[22px] shrink-0">
        {apps.map((app, index) => (
          <li key={index} className="h-9">
            {app && (
              <button
                type="button"
                className="flex items-center justify-between w-full h-full pr-1 whitespace-nowrap"
              >
                {app.name}
                {app.folder && (
                  <svg viewBox="0 0 9 6" className="w-[9px] h-1.5" fill="none" aria-hidden="true">
                    <path d="M0.500 1l4 4l4 -4" stroke="#e6e6e6" />
                  </svg>
                )}
              </button>
            )}
          </li>
        ))}
      </ul>
      <div className="pl-[22px] pt-[49px]">
        <button
          type="button"
          className="flex flex-col items-center justify-end size-[100px] px-2 pb-1 bg-[#0078d7]"
        >
          <svg viewBox="0 0 78 80" className="size-[26px]" aria-hidden="true">
            <path d="M12 4H66L76 24H2z" fill="#a85f17" />
            <path d="M12 22q8 -16 18 -12q8 -8 16 0q14 0 18 12z" fill="#fde9c6" />
            <path d="M2 22h74v14H2z" fill="#ee9432" />
            <path d="M6 36h66l-6 42H12z" fill="#eceef0" />
            <path d="M30 52l9 -10l9 10M50 56l4 12H42M36 68H25l4 -12" fill="none" stroke="#df8747" strokeWidth="6" />
          </svg>
          <span className="text-left leading-4 mt-1">强力卸载电脑中的软件</span>
        </button>
      </div>
    </div>
  );
}

function StatusBar() {
  return (
    <footer className="flex items-center justify-end h-[42px] border-t border-b-4 border-t-[#a9afb2] border-b-[#b8bcbc] bg-[#f5f7f8] text-xs text-[#3a4043] overflow-hidden">
      <div className="flex items-center w-[41px] h-[30px] pl-2 border-x border-[#a9afb2]">
        <svg viewBox="0 0 12 18" className="w-3 h-[18px]" aria-hidden="true">
          <path d="M1 1v17" stroke="#6b7173" strokeWidth="1.500" />
          <path d="M1 1l11 4l-11 4z" fill="#d92b3f" />
        </svg>
        <span className="text-[10px] leading-3 -ml-2 mb-1 self-end pl-px">5</span>
      </div>
      <div className="flex items-center w-12 h-[30px] ml-1 pl-0.5 border-x border-[#a9afb2]">
        <button type="button" aria-label="查找" className="flex items-center justify-center w-7 h-6 border border-[#b5babd]">
          <svg viewBox="0 0 18 16" className="w-[18px] h-4">
            <path d="M4 1h3v2h4V1h3l3 10v4h-6V9H7v6H1v-4z" fill="#3a3e40" />
            <path d="M3 9l2 -5v9H3z" fill="#a9aeb1" />
          </svg>
        </button>
        <button type="button" aria-label="查找选项" className="flex items-center justify-center w-3.5 h-6 border border-l-0 border-[#b5babd]">
          <Caret />
        </button>
      </div>
      <button type="button" aria-label="选择" className="flex items-center justify-center w-10 h-7 ml-0.5 border border-[#9fa5a8]">
        <svg viewBox="0 0 18 18" className="size-[18px]" fill="none">
          <path d="M1 5l4 -4h12v12l-4 4H1zM1 5h12v12M13 5l4 -4" fill="#fff" stroke="#2f3436" />
          <path d="M4 8h7v7H4z" fill="#7fcbe8" stroke="#b49c5c" />
        </svg>
      </button>
      <select
        aria-label="选择过滤器"
        className="appearance-none w-[150px] h-[26px] ml-[98px] -mr-1 pl-[7px] border border-[#9fa5a8] bg-[#f7f8f9]"
      >
        <option>几何</option>
      </select>
    </footer>
  );
}

function SpeedBall() {
  return (
    <div className="absolute right-1 top-[103px] flex flex-col items-center justify-center size-[67px] rounded-full bg-white shadow text-[#3f4446]">
      <svg viewBox="0 0 67 67" className="absolute inset-0" fill="none" aria-hidden="true">
        <defs>
          <radialGradient id="ball">
            <stop offset="0.500" stopColor="#ffffff" />
            <stop offset="1" stopColor="#c6f5cd" />
          </radialGradient>
        </defs>
        <circle cx="33" cy="34" r="28" fill="url(#ball)" stroke="#3fb56d" strokeWidth="1.300" />
        <path d="M34 3A31 31 0 0 1 63 48" stroke="#4fd770" strokeWidth="5" />
      </svg>
      <div className="relative flex items-baseline leading-6">
        <span className="text-2xl leading-6 font-light font-['Open_Sans']">33</span>
        <span className="text-xs leading-6">%</span>
      </div>
      <div className="relative flex text-[9px] leading-4">
        <span className="text-[#2b84b8]">↑</span>
        <span>26.3K/s</span>
      </div>
    </div>
  );
}

export default function App() {
  const [tab, setTab] = useState("视图");

  return (
    <div className="relative flex flex-col h-screen overflow-hidden bg-white font-['Noto_Sans','Noto_Sans_CJK_SC',sans-serif]">
      <TitleBar />
      <TabBar tab={tab} setTab={setTab} />
      <Ribbon />
      <main className="flex flex-1 min-h-0">
        <Sidebar />
        <div className="relative flex-1 min-w-0 pl-12 pt-[7px] overflow-hidden bg-[#fdfefe]">
          <div className="flex justify-center">
            <ViewToolbar />
          </div>
          <Model />
          <Watermark />
        </div>
      </main>
      <StatusBar />

      <StartMenu />

      <div className="absolute left-[788px] top-0 flex items-center gap-1.5 w-[92px] h-5 pl-1.5 rounded-b bg-[#606667] text-xs text-[#d9dcdc] whitespace-nowrap">
        <svg viewBox="0 0 12 10" className="w-3 h-2.5" aria-hidden="true">
          <path d="M0 6h3v4H0zM4 4h3v6H4zM9 1h3v9H9z" fill="#17a84e" />
        </svg>
        <span className="size-2 rounded-full bg-[#10c95c]" />
        腾讯会议
      </div>

      <SpeedBall />

      <div className="absolute right-0 top-[170px] flex items-center w-[150px] h-9 rounded-l bg-[#373b3e] text-xs text-white whitespace-nowrap overflow-hidden">
        <div className="flex items-center justify-center w-9 h-full border-r border-[#2a2d2f] shrink-0">
          <svg viewBox="0 0 12 16" className="w-3 h-4" fill="none" aria-hidden="true">
            <rect x="3" y="1" width="6" height="10" rx="3" fill="#8f9496" />
            <path d="M3 6h6v2a3 3 0 0 1 -6 0z" fill="#1fb56b" />
            <path d="M1 7a5 5 0 0 0 10 0M6 12v3M3 15h6" stroke="#8f9496" />
          </svg>
        </div>
        <span className="pl-1.5">正在讲话: ৎ在春天的</span>
      </div>
    </div>
  );
}
